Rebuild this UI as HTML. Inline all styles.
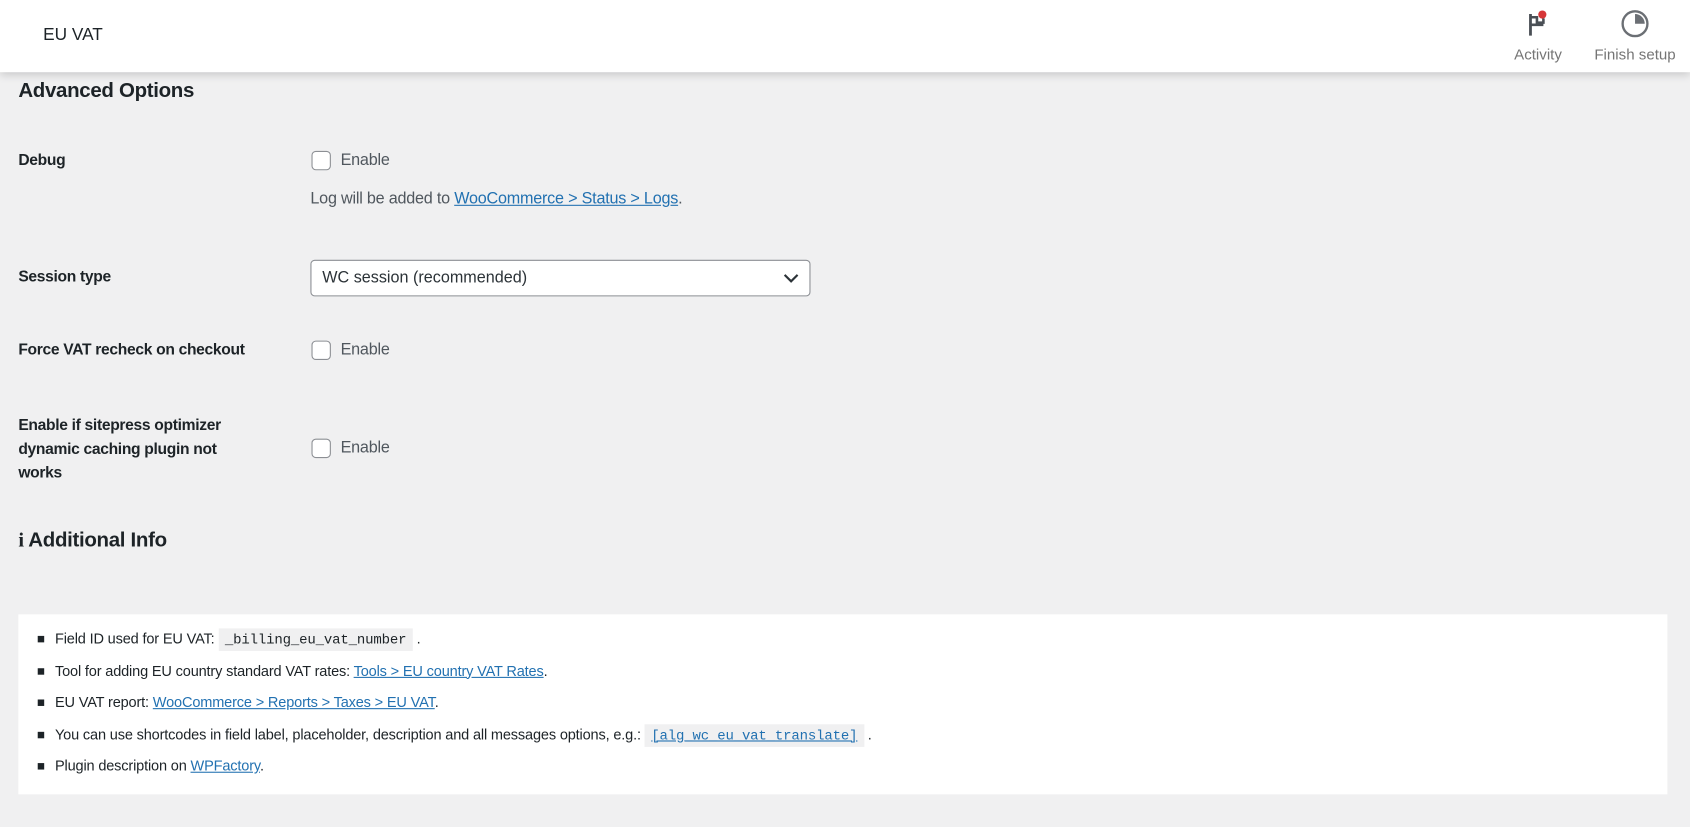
<!DOCTYPE html>
<html><head><meta charset="utf-8"><style>
*{box-sizing:border-box;margin:0;padding:0}
html,body{width:1690px;height:827px;overflow:hidden}
body{background:#f0f0f1;font-family:"Liberation Sans",sans-serif;color:#1d2327}
#w{position:absolute;left:0;top:0;width:1568px;height:767px;transform:scale(1.0778);transform-origin:0 0}
.hdr{position:absolute;left:0;top:0;width:1568px;height:67px;background:#fff;box-shadow:0 2px 8px rgba(0,0,0,.18)}
.hdr .t{position:absolute;left:40px;top:24px;font-size:16px;color:#1d2327}
.ic{position:absolute;top:9px;text-align:center;font-size:14px;color:#757575}
.ic span{display:block;margin-top:4px}
.a{position:absolute;font-size:14px;letter-spacing:-.2px}
.h{font-size:19px;font-weight:600;letter-spacing:-.3px}
.lb{font-weight:bold;font-size:14.5px;line-height:22px;letter-spacing:-.3px}
.cb{position:absolute;width:18px;height:18px;border:1px solid #8c8f94;border-radius:4px;background:#fff}
.en{font-size:15px;color:#50575e}
a{color:#2271b1;text-decoration:underline}
.sel{position:absolute;left:288px;top:241px;width:464px;height:34px;border:1px solid #8c8f94;border-radius:4px;background:#fff;font-size:15px;padding:7px 10px;color:#2c3338}
.box{position:absolute;left:17px;top:570px;width:1530px;height:167px;background:#fff}
.box ul{list-style:none;padding:13px 0 0 18px}
.box li{font-size:13.5px;height:29.5px;line-height:20px;position:relative;padding-left:16px;letter-spacing:-.15px}
.box li:before{content:"";position:absolute;left:0;top:7px;width:6px;height:6px;background:#1d2327}
code{font-family:"Liberation Mono",monospace;background:#f0f0f1;padding:3px 6px;font-size:13px}
</style></head><body><div id="w">
<div class="hdr"><div class="t">EU VAT</div>
<div class="ic" style="left:1395px;width:64px">
<svg width="26" height="26" viewBox="0 0 26 26"><path d="M6 4v20" stroke="#4a4f55" stroke-width="2.6"/><path d="M6 7h6v5h6V8" fill="none" stroke="#4a4f55" stroke-width="2.4"/><path d="M6 14h12" stroke="#4a4f55" stroke-width="2.4"/><circle cx="17" cy="4.5" r="3.8" fill="#d63638"/></svg><span>Activity</span></div>
<div class="ic" style="left:1474px;width:86px">
<svg width="26" height="26" viewBox="0 0 26 26"><circle cx="13" cy="13" r="11.5" fill="none" stroke="#6b6f74" stroke-width="2.2"/><path d="M13 4a9 9 0 0 1 9 9h-9z" fill="#6b6f74"/></svg><span>Finish setup</span></div>
</div>
<div class="a h" style="left:17px;top:74px">Advanced Options</div>
<div class="a lb" style="left:17px;top:138px">Debug</div>
<div class="cb" style="left:289px;top:140px"></div><div class="a en" style="left:316px;top:140px">Enable</div>
<div class="a en" style="left:288px;top:176px">Log will be added to <a>WooCommerce &gt; Status &gt; Logs</a>.</div>
<div class="a lb" style="left:17px;top:246px">Session type</div>
<div class="sel">WC session (recommended)<svg style="position:absolute;right:10px;top:11px" width="14" height="10" viewBox="0 0 14 10"><path d="M1 2l6 6 6-6" fill="none" stroke="#2c3338" stroke-width="2"/></svg></div>
<div class="a lb" style="left:17px;top:314px">Force VAT recheck on checkout</div>
<div class="cb" style="left:289px;top:316px"></div><div class="a en" style="left:316px;top:316px">Enable</div>
<div class="a lb" style="left:17px;top:384px;width:220px">Enable if sitepress optimizer dynamic caching plugin not works</div>
<div class="cb" style="left:289px;top:407px"></div><div class="a en" style="left:316px;top:407px">Enable</div>
<div class="a h" style="left:17px;top:491px"><span style="font-family:'Liberation Serif',serif;font-weight:bold">i</span> Additional Info</div>
<div class="box"><ul>
<li>Field ID used for EU VAT: <code>_billing_eu_vat_number</code> .</li>
<li>Tool for adding EU country standard VAT rates: <a>Tools &gt; EU country VAT Rates</a>.</li>
<li>EU VAT report: <a>WooCommerce &gt; Reports &gt; Taxes &gt; EU VAT</a>.</li>
<li>You can use shortcodes in field label, placeholder, description and all messages options, e.g.: <code><a>[alg_wc_eu_vat_translate]</a></code> .</li>
<li>Plugin description on <a>WPFactory</a>.</li>
</ul></div>
</div></body></html>
